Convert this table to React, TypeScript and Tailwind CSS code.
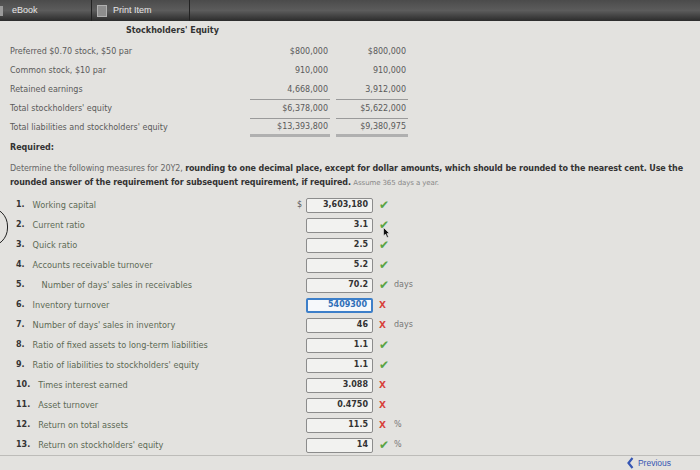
const equity = [
  { label: "Preferred $0.70 stock, $50 par", a: "$800,000", b: "$800,000", line: "" },
  { label: "Common stock, $10 par", a: "910,000", b: "910,000", line: "" },
  { label: "Retained earnings", a: "4,668,000", b: "3,912,000", line: "" },
  { label: "Total stockholders' equity", a: "$6,378,000", b: "$5,622,000", line: "top" },
  { label: "Total liabilities and stockholders' equity", a: "$13,393,800", b: "$9,380,975", line: "double" },
];

const measures = [
  { n: "1.", label: "Working capital", value: "3,603,180", ok: true, dollar: true },
  { n: "2.", label: "Current ratio", value: "3.1", ok: true },
  { n: "3.", label: "Quick ratio", value: "2.5", ok: true },
  { n: "4.", label: "Accounts receivable turnover", value: "5.2", ok: true },
  { n: "5.", label: "Number of days' sales in receivables", value: "70.2", ok: true, unit: "days", wide: true },
  { n: "6.", label: "Inventory turnover", value: "5409300", ok: false, active: true },
  { n: "7.", label: "Number of days' sales in inventory", value: "46", ok: false, unit: "days" },
  { n: "8.", label: "Ratio of fixed assets to long-term liabilities", value: "1.1", ok: true },
  { n: "9.", label: "Ratio of liabilities to stockholders' equity", value: "1.1", ok: true },
  { n: "10.", label: "Times interest earned", value: "3.088", ok: false },
  { n: "11.", label: "Asset turnover", value: "0.4750", ok: false },
  { n: "12.", label: "Return on total assets", value: "11.5", ok: false, unit: "%" },
  { n: "13.", label: "Return on stockholders' equity", value: "14", ok: true, unit: "%" },
];

export default function App() {
  return (
    <div
      className="relative w-[700px] h-[470px] overflow-hidden bg-[#e3e2df] text-[8px] text-[#5a5a5a]"
      style={{ fontFamily: '"DejaVu Sans", Verdana, sans-serif' }}
    >
      {/* top toolbar */}
      <div className="flex h-[21px] bg-gradient-to-b from-[#4b4b4b] via-[#5c5c5c] to-[#2c2c2c] text-[9px] text-[#e6e6e6]" style={{ fontFamily: '"Liberation Sans", Arial, sans-serif' }}>
        <div className="flex items-center w-[92px] border-r border-[#222]">
          <div className="w-[3px] h-[10px] bg-[#9a9a9a] mr-[9px]" />
          <span>eBook</span>
        </div>
        <div className="flex items-center w-[98px] border-r border-[#222] pl-[5px]">
          <div className="w-[10px] h-[12px] bg-[#8d8d8d] border border-[#b0b0b0] mr-[6px]" />
          <span>Print Item</span>
        </div>
        <div className="flex-1" />
      </div>

      {/* stockholders' equity table */}
      <div className="pl-[10px]">
        <div className="h-[19px] flex items-center pl-[116px] font-bold text-[#333]">Stockholders' Equity</div>
        <div className="h-[2px]" />
        {equity.map((r) => (
          <div key={r.label} className="flex h-[19px] items-center">
            <div className="w-[240px]">{r.label}</div>
            <div
              className={
                "w-[80px] h-full flex items-center justify-end pr-[2px] " +
                (r.line === "top" ? "border-t border-[#9a9a9a] " : "") +
                (r.line === "double" ? "border-t border-b-[3px] border-b-[#b0b0b0] border-t-[#9a9a9a] " : "")
              }
            >
              {r.a}
            </div>
            <div
              className={
                "ml-[6px] w-[72px] h-full flex items-center justify-end pr-[2px] " +
                (r.line === "top" ? "border-t border-[#9a9a9a] " : "") +
                (r.line === "double" ? "border-t border-b-[3px] border-b-[#b0b0b0] border-t-[#9a9a9a] " : "")
              }
            >
              {r.b}
            </div>
          </div>
        ))}
      </div>

      {/* required */}
      <div className="px-[10px] pt-[3px]">
        <div className="font-bold text-[#333] h-[16px] flex items-center">Required:</div>
        <div className="mt-[6px] leading-[14px] text-[#666] tracking-[-0.1px]">
          <div>
            Determine the following measures for 20Y2,{" "}
            <b className="text-[#333]">
              rounding to one decimal place, except for dollar amounts, which should be rounded to the nearest cent. Use the
            </b>
          </div>
          <div>
            <b className="text-[#333]">rounded answer of the requirement for subsequent requirement, if required.</b>{" "}
            <span className="text-[7px] text-[#888]">Assume 365 days a year.</span>
          </div>
        </div>
      </div>

      {/* measures */}
      <div className="pl-[16px] pt-[5px]">
        {measures.map((m) => (
          <div key={m.n} className="flex items-center h-[20px]">
            <div className="w-[281px] flex items-center">
              <span className="font-bold text-[#333]">{m.n}</span>
              <span className={(m.wide ? "ml-[17px]" : "ml-[8px]") + " text-[#5d6a55] text-[8.2px]"}>{m.label}</span>
            </div>
            <div className="w-[9px] text-[#555]">{m.dollar ? "$" : ""}</div>
            <div
              className={
                "w-[67px] h-[15px] flex items-center justify-end pr-[4px] rounded-[2px] font-bold " +
                (m.active
                  ? "border-2 border-[#3d7fc9] bg-[#f6f8fb] text-[#2f6fb8]"
                  : "border border-[#8c8c8c] bg-[#f2f2f0] text-[#333]")
              }
            >
              {m.value}
            </div>
            <div className="ml-[6px] w-[12px] flex items-center">
              {m.ok ? (
                <span className="text-[#5aa444] text-[12px] leading-none">✔</span>
              ) : (
                <span className="text-[#d8413a] text-[9px] font-bold leading-none">X</span>
              )}
            </div>
            {m.unit && <span className="ml-[3px] text-[#777]">{m.unit}</span>}
          </div>
        ))}
      </div>

      {/* footer */}
      <div className="absolute left-0 right-0 bottom-0 h-[15px] border-t border-[#bdbcb9] flex items-center justify-end pr-[29px]">
        <svg className="mr-[4px]" width="7" height="12" viewBox="0 0 7 12">
          <path d="M5.5 1 L1.5 6 L5.5 11" fill="none" stroke="#3656b3" strokeWidth="2.2" />
        </svg>
        <span className="text-[#3656b3] text-[8.5px] leading-[13px]" style={{ fontFamily: '"Liberation Sans", Arial, sans-serif' }}>Previous</span>
      </div>

      {/* overlays: partial circle at left and mouse cursor */}
      <div className="absolute left-[-30px] top-[207px] w-[38px] h-[40px] rounded-full border-[1.5px] border-[#222]" />
      <svg className="absolute left-[383px] top-[227px]" width="7" height="11" viewBox="0 0 7 11">
        <path d="M0.5 0.5 L0.5 9 L2.5 7 L4 10.5 L5.5 10 L4 6.5 L6.5 6.5 Z" fill="#111" stroke="#eee" strokeWidth="0.6" />
      </svg>
    </div>
  );
}
